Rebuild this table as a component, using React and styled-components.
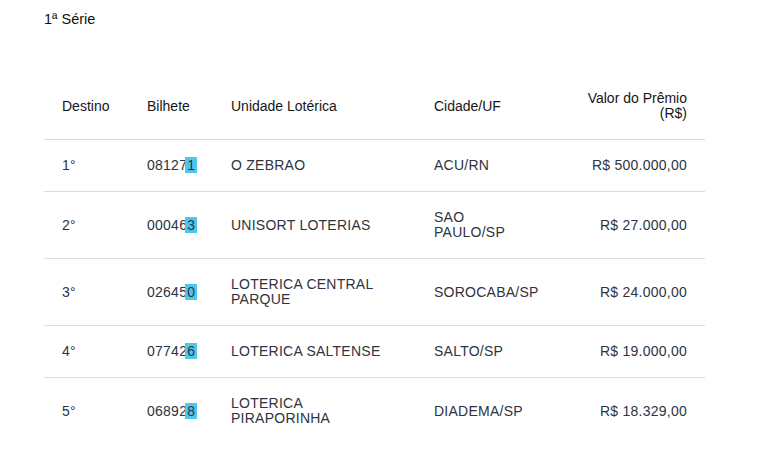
import React from 'react';
import styled, { createGlobalStyle } from 'styled-components';

const GlobalStyle = createGlobalStyle`
    body {
        margin: 0;
        background: #fff;
        font-family: "Liberation Sans", Arial, sans-serif;
    }
`;

const Page = styled.section`
    padding: 11px 58px 0 44px;
`;

const Title = styled.h3`
    margin: 0;
    font-size: 14.5px;
    line-height: 16px;
    font-weight: normal;
    color: #111;
`;

const Table = styled.div`
    margin-top: 46px;
    display: grid;
    grid-template-columns: 85px 84px 203px 141px 1fr;
    width: 661px;
`;

const HeadCell = styled.div`
    padding: 18px;
    font-size: 14px;
    line-height: 15px;
    color: #161616;
    display: flex;
    align-items: center;
    justify-content: ${props => (props.right ? 'flex-end' : 'flex-start')};
    text-align: ${props => (props.right ? 'right' : 'left')};
    border-bottom: 1px solid #dcdcdc;
`;

const Cell = styled.div`
    padding: 18px;
    font-size: 14px;
    line-height: 15px;
    letter-spacing: 0.25px;
    color: #2f3340;
    display: flex;
    align-items: center;
    justify-content: ${props => (props.right ? 'flex-end' : 'flex-start')};
    text-align: ${props => (props.right ? 'right' : 'left')};
    border-bottom: ${props => (props.last ? 'none' : '1px solid #dcdcdc')};
`;

const Mark = styled.span`
    background: #4fc6ee;
    padding: 0 2px 0 2px;
    margin-left: -2px;
`;

const rows = [
    { pos: '1°', ticket: '081271', unit: 'O ZEBRAO', city: 'ACU/RN', prize: 'R$ 500.000,00' },
    { pos: '2°', ticket: '000463', unit: 'UNISORT LOTERIAS', city: 'SAO PAULO/SP', prize: 'R$ 27.000,00' },
    { pos: '3°', ticket: '026450', unit: 'LOTERICA CENTRAL PARQUE', city: 'SOROCABA/SP', prize: 'R$ 24.000,00' },
    { pos: '4°', ticket: '077426', unit: 'LOTERICA SALTENSE', city: 'SALTO/SP', prize: 'R$ 19.000,00' },
    { pos: '5°', ticket: '068928', unit: 'LOTERICA PIRAPORINHA', city: 'DIADEMA/SP', prize: 'R$ 18.329,00' },
];

const App = () => {
    return (
        <Page>
            <GlobalStyle />
            <Title>1ª Série</Title>
            <Table>
                <HeadCell>Destino</HeadCell>
                <HeadCell>Bilhete</HeadCell>
                <HeadCell>Unidade Lotérica</HeadCell>
                <HeadCell>Cidade/UF</HeadCell>
                <HeadCell right>Valor do Prêmio (R$)</HeadCell>
                {rows.map((r, i) => {
                    const last = i === rows.length - 1;
                    return (
                        <React.Fragment key={r.ticket}>
                            <Cell last={last}>{r.pos}</Cell>
                            <Cell last={last}>
                                <span>
                                    {r.ticket.slice(0, 5)}
                                    <Mark>{r.ticket.slice(5)}</Mark>
                                </span>
                            </Cell>
                            <Cell last={last}>{r.unit}</Cell>
                            <Cell last={last}>{r.city}</Cell>
                            <Cell last={last} right>{r.prize}</Cell>
                        </React.Fragment>
                    );
                })}
            </Table>
        </Page>
    );
};

export default App;
